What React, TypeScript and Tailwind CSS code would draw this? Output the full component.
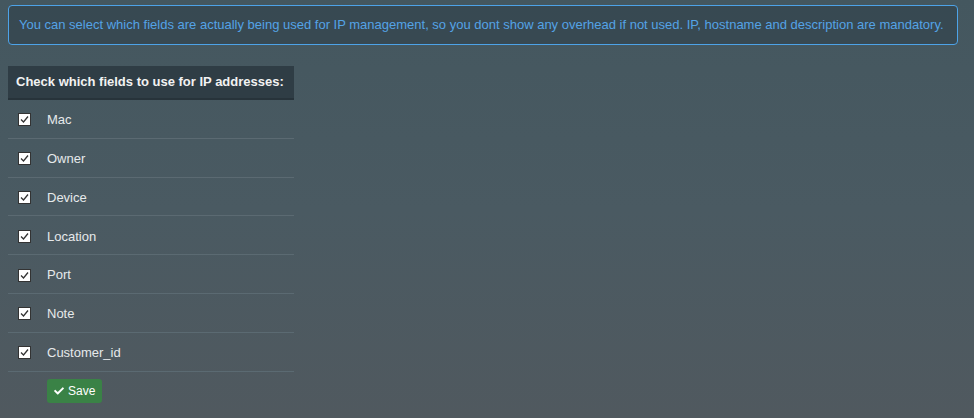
import React from 'react';
import { FaCheck } from 'react-icons/fa';

const fields = ['Mac', 'Owner', 'Device', 'Location', 'Port', 'Note', 'Customer_id'];

const CheckBox: React.FC = () => (
  <span className="flex h-[13px] w-[13px] items-center justify-center border border-[#333] bg-white">
    <svg width="9" height="9" viewBox="0 0 9 9">
      <path d="M1 4.5 L3.5 7 L8 1.5" fill="none" stroke="#333" strokeWidth="1.3" />
    </svg>
  </span>
);

const App: React.FC = () => {
  return (
    <div
      className="h-[418px] w-[974px] overflow-hidden bg-gradient-to-b from-[#44575f] via-[#4a5a62] to-[#50595f] text-[13px]"
      style={{ fontFamily: '"Liberation Sans", Arial, sans-serif' }}
    >
      <div className="px-2 pt-[5px]">
        {/* info alert */}
        <div className="flex h-[40px] w-[950px] items-center rounded-[4px] border border-[#4da3e8] bg-[#34464f]/80 px-[10px] text-[#54a3e6]">
          You can select which fields are actually being used for IP management, so you dont show any overhead if not used. IP, hostname and description are mandatory.
        </div>

        {/* fields table */}
        <div className="mt-[21px] w-[286px]">
          <div className="flex h-[34px] items-center border-b-2 border-[#27333a] bg-[#2f3d45] px-2 font-bold text-[#f2f2f2]">
            Check which fields to use for IP addresses:
          </div>
          {fields.map((f) => (
            <div key={f} className="flex h-[38.8px] items-center border-b border-[#5b6a72] pt-[2px] text-[#e6e9eb]">
              <div className="w-[39px] pl-[10px]">
                <CheckBox />
              </div>
              <span>{f}</span>
            </div>
          ))}
          <div className="pl-[39px] pt-[7px]">
            <button className="flex h-[24px] items-center gap-[4px] rounded-[3px] bg-[#3a8246] px-[7px] text-[12px] text-white">
              <FaCheck className="h-[10px] w-[10px]" />
              Save
            </button>
          </div>
        </div>
      </div>
    </div>
  );
};

export default App;
